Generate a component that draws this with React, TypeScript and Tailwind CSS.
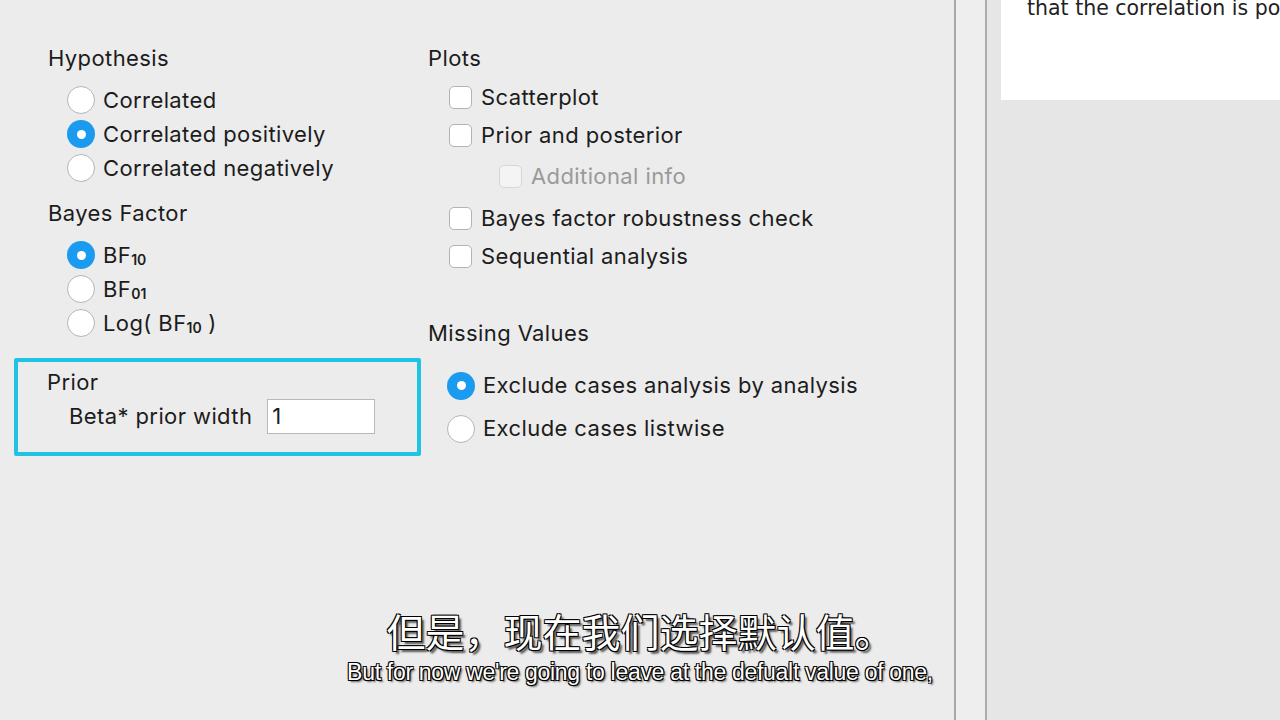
import React from 'react'

const ui = "font-['Inter','Liberation_Sans',sans-serif] text-[22px] tracking-[0.4px] text-[#1c1c1c]"

function Radio({ on }: { on?: boolean }) {
  return on ? (
    <span className="w-[28px] h-[28px] rounded-full bg-[#1b9bf0] flex items-center justify-center shrink-0">
      <span className="w-[9px] h-[9px] rounded-full bg-white" />
    </span>
  ) : (
    <span className="w-[28px] h-[28px] rounded-full bg-white border border-[#b5b5b5] shrink-0" />
  )
}

function Box({ dim }: { dim?: boolean }) {
  return (
    <span
      className={
        dim
          ? 'w-[23px] h-[23px] rounded-[5px] bg-[#f4f4f4] border border-[#d6d6d6] shrink-0'
          : 'w-[23px] h-[23px] rounded-[5px] bg-white border border-[#b3b3b3] shrink-0'
      }
    />
  )
}

function BF({ sub }: { sub: string }) {
  return (
    <span>
      BF<sub className="text-[14px] font-semibold relative top-[2px] tracking-[0px]">{sub}</sub>
    </span>
  )
}

export default function App() {
  return (
    <div className="w-[1280px] h-[720px] flex overflow-hidden bg-[#ececec] relative">
      <div className={`w-[954px] shrink-0 flex gap-[7px] pl-[14px] pt-[41px] ${ui}`}>
        <div className="w-[407px] flex flex-col">
          <div className="h-[34px] flex items-center pl-[34px]">Hypothesis</div>
          <div className="flex flex-col mt-[8px] pl-[53px]">
            <div className="h-[34px] flex items-center gap-[8px]"><Radio />Correlated</div>
            <div className="h-[34px] flex items-center gap-[8px]"><Radio on />Correlated positively</div>
            <div className="h-[34px] flex items-center gap-[8px]"><Radio />Correlated negatively</div>
          </div>
          <div className="h-[34px] flex items-center pl-[34px] mt-[11px]">Bayes Factor</div>
          <div className="flex flex-col mt-[8px] pl-[53px]">
            <div className="h-[34px] flex items-center gap-[8px]"><Radio on /><BF sub="10" /></div>
            <div className="h-[34px] flex items-center gap-[8px]"><Radio /><BF sub="01" /></div>
            <div className="h-[34px] flex items-center gap-[8px]"><Radio />
              <span>Log( <BF sub="10" /> )</span>
            </div>
          </div>
          <div className="mt-[18px] h-[98px] border-[4px] border-[#1fc3e3] rounded-[2px] pt-[3px]">
            <div className="h-[34px] flex items-center pl-[29px]">Prior</div>
            <div className="h-[35px] flex items-center pl-[51px] gap-[15px]">
              <span>Beta* prior width</span>
              <span className="w-[108px] h-[35px] bg-white border border-[#b9b9b9] flex items-center pl-[4px]">1</span>
            </div>
          </div>
        </div>

        <div className="flex flex-col">
          <div className="h-[34px] flex items-center">Plots</div>
          <div className="flex flex-col mt-[3px] pl-[21px]">
            <div className="h-[38px] flex items-center gap-[9px]"><Box />Scatterplot</div>
            <div className="h-[38px] flex items-center gap-[9px]"><Box />Prior and posterior</div>
            <div className="h-[45px] flex items-center gap-[9px] pl-[50px] text-[#9a9a9a]"><Box dim />Additional info</div>
            <div className="h-[38px] flex items-center gap-[9px]"><Box />Bayes factor robustness check</div>
            <div className="h-[38px] flex items-center gap-[9px]"><Box />Sequential analysis</div>
          </div>
          <div className="h-[34px] flex items-center mt-[41px]">Missing Values</div>
          <div className="flex flex-col mt-[14px] pl-[19px]">
            <div className="h-[43px] flex items-center gap-[8px]"><Radio on />Exclude cases analysis by analysis</div>
            <div className="h-[43px] flex items-center gap-[8px]"><Radio />Exclude cases listwise</div>
          </div>
        </div>
      </div>

      <div className="w-[2px] bg-[#a8a8a8] shrink-0" />
      <div className="w-[29px] bg-[#eeeeee] shrink-0" />
      <div className="w-[2px] bg-[#acacac] shrink-0" />
      <div className="flex-1 bg-[#e6e6e6] pl-[14px]">
        <div className="h-[100px] bg-white pl-[26px] overflow-hidden">
          <div className="font-['DejaVu_Sans',sans-serif] text-[20.5px] text-[#222] whitespace-nowrap leading-[20px] -mt-[2px]">
            that the correlation is positive
          </div>
        </div>
      </div>

      <div className="absolute left-0 right-0 top-[604px] flex flex-col items-center text-white">
        <div className="font-['Noto_Sans_CJK_SC',sans-serif] text-[39px] leading-[52px] [text-shadow:-1px_-1px_0_#000,1px_-1px_0_#000,-1px_1px_0_#000,1px_1px_0_#000,3px_3px_2px_#555]">
          但是，现在我们选择默认值。
        </div>
        <div className="font-['Liberation_Sans',sans-serif] text-[23px] leading-[28px] tracking-[-0.3px] mt-[2px] [text-shadow:-1px_-1px_0_#000,1px_-1px_0_#000,-1px_1px_0_#000,1px_1px_0_#000,2px_2px_2px_#555]">
          But for now we're going to leave at the defualt value of one,
        </div>
      </div>
    </div>
  )
}
